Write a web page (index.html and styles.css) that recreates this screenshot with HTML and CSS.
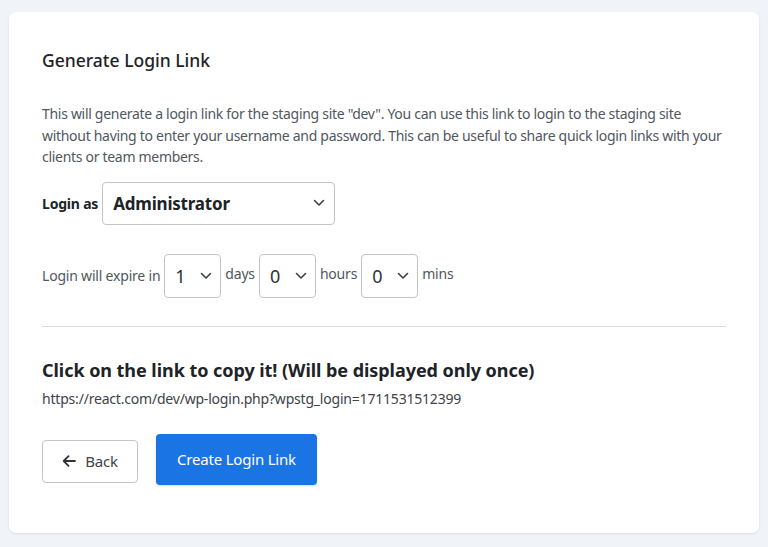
FILE: index.html
```html
<!DOCTYPE html>
<html>
<head>
<meta charset="utf-8">
<link rel="stylesheet" href="styles.css">
</head>
<body>
<div class="card">
  <h2 class="title">Generate Login Link</h2>
  <p class="desc">This will generate a login link for the staging site "dev". You can use this link to login to the staging site without having to enter your username and password. This can be useful to share quick login links with your clients or team members.</p>
  <div class="login-row">
    <span class="label">Login as</span>
    <div class="select select-role">
      <span class="value">Administrator</span>
      <svg class="chev" width="12" height="8" viewBox="0 0 12 8"><path d="M1.5 1.5 L6 6 L10.5 1.5" fill="none" stroke="#3c434a" stroke-width="1.6" stroke-linecap="round" stroke-linejoin="round"/></svg>
    </div>
  </div>
  <div class="expire-row">
    <span class="txt">Login will expire in</span>
    <div class="select select-num"><span class="value">1</span><svg class="chev" width="12" height="8" viewBox="0 0 12 8"><path d="M1.5 1.5 L6 6 L10.5 1.5" fill="none" stroke="#3c434a" stroke-width="1.6" stroke-linecap="round" stroke-linejoin="round"/></svg></div>
    <span class="unit">days</span>
    <div class="select select-num"><span class="value">0</span><svg class="chev" width="12" height="8" viewBox="0 0 12 8"><path d="M1.5 1.5 L6 6 L10.5 1.5" fill="none" stroke="#3c434a" stroke-width="1.6" stroke-linecap="round" stroke-linejoin="round"/></svg></div>
    <span class="unit">hours</span>
    <div class="select select-num"><span class="value">0</span><svg class="chev" width="12" height="8" viewBox="0 0 12 8"><path d="M1.5 1.5 L6 6 L10.5 1.5" fill="none" stroke="#3c434a" stroke-width="1.6" stroke-linecap="round" stroke-linejoin="round"/></svg></div>
    <span class="unit">mins</span>
  </div>
  <hr class="sep">
  <h3 class="copy-title">Click on the link to copy it! (Will be displayed only once)</h3>
  <div class="url">https://react.com/dev/wp-login.php?wpstg_login=1711531512399</div>
  <div class="actions">
    <button class="btn btn-back"><svg width="14" height="12" viewBox="0 0 14 12"><path d="M13 6 H2 M6.5 1.2 L1.7 6 L6.5 10.8" fill="none" stroke="#2c3338" stroke-width="1.8" stroke-linecap="round" stroke-linejoin="round"/></svg><span>Back</span></button>
    <button class="btn btn-primary">Create Login Link</button>
  </div>
</div>
</body>
</html>
```

FILE: styles.css
```css
* { box-sizing: border-box; }
html, body { margin: 0; padding: 0; }
body {
  background: #f0f4f8;
  font-family: "Noto Sans", "Open Sans", sans-serif;
  color: #50575e;
  height: 547px;
  overflow: hidden;
  letter-spacing: -0.2px;
}
.card {
  margin: 12px 9px 0 9px;
  height: 521px;
  background: #fff;
  border-radius: 7px;
  box-shadow: 0 1px 3px rgba(0,0,0,0.08);
  padding: 36px 33px 0 33px;
}
.title {
  margin: 0;
  font-size: 17.5px;
  line-height: 24px;
  font-weight: 500;
  letter-spacing: 0;
  color: #1d2327;
}
.desc {
  margin: 31px 0 0 0;
  font-size: 14px;
  line-height: 21.5px;
  letter-spacing: -0.3px;
  color: #50575e;
}
.login-row {
  margin-top: 14px;
  display: flex;
  align-items: center;
  gap: 4px;
}
.label {
  font-size: 14px;
  font-weight: 700;
  color: #1d2327;
}
.select {
  display: flex;
  align-items: center;
  justify-content: space-between;
  border: 1px solid #c3c4c7;
  border-radius: 4px;
  background: #fff;
}
.select-role {
  width: 233px;
  height: 43px;
  padding: 0 9px 0 10px;
}
.select-role .value {
  font-size: 17px;
  font-weight: 700;
  color: #1d2327;
}
.expire-row {
  margin-top: 29px;
  display: flex;
  align-items: center;
  font-size: 14px;
  color: #50575e;
}
.expire-row .txt { margin-right: 4px; }
.unit {
  margin: 10px 4px 0 4px;
  align-self: flex-start;
}
.select-num {
  width: 57px;
  height: 44px;
  padding: 0 8px 0 10px;
}
.select-num .value {
  font-size: 18px;
  color: #2c3338;
}
.sep {
  margin: 28px 0 0 0;
  border: 0;
  border-top: 1px solid #dcdcde;
}
.copy-title {
  margin: 31px 0 0 0;
  font-size: 18px;
  line-height: 24px;
  font-weight: 700;
  letter-spacing: -0.05px;
  color: #1d2327;
}
.url {
  margin-top: 7px;
  font-size: 14px;
  line-height: 20px;
  color: #3c434a;
}
.actions {
  margin-top: 25px;
  display: flex;
  align-items: center;
  gap: 18px;
}
.btn {
  font-family: inherit;
  font-size: 15px;
  letter-spacing: -0.2px;
  border-radius: 4px;
  cursor: pointer;
  display: flex;
  align-items: center;
  justify-content: center;
}
.btn-back {
  width: 96px;
  height: 43px;
  margin-top: 4px;
  background: #fff;
  border: 1px solid #c3c4c7;
  color: #3c434a;
  gap: 9px;
}
.btn-primary {
  width: 161px;
  height: 51px;
  background: #1b74e4;
  border: 0;
  color: #fff;
  box-shadow: 0 1px 2px rgba(0,0,0,0.15);
}
```
